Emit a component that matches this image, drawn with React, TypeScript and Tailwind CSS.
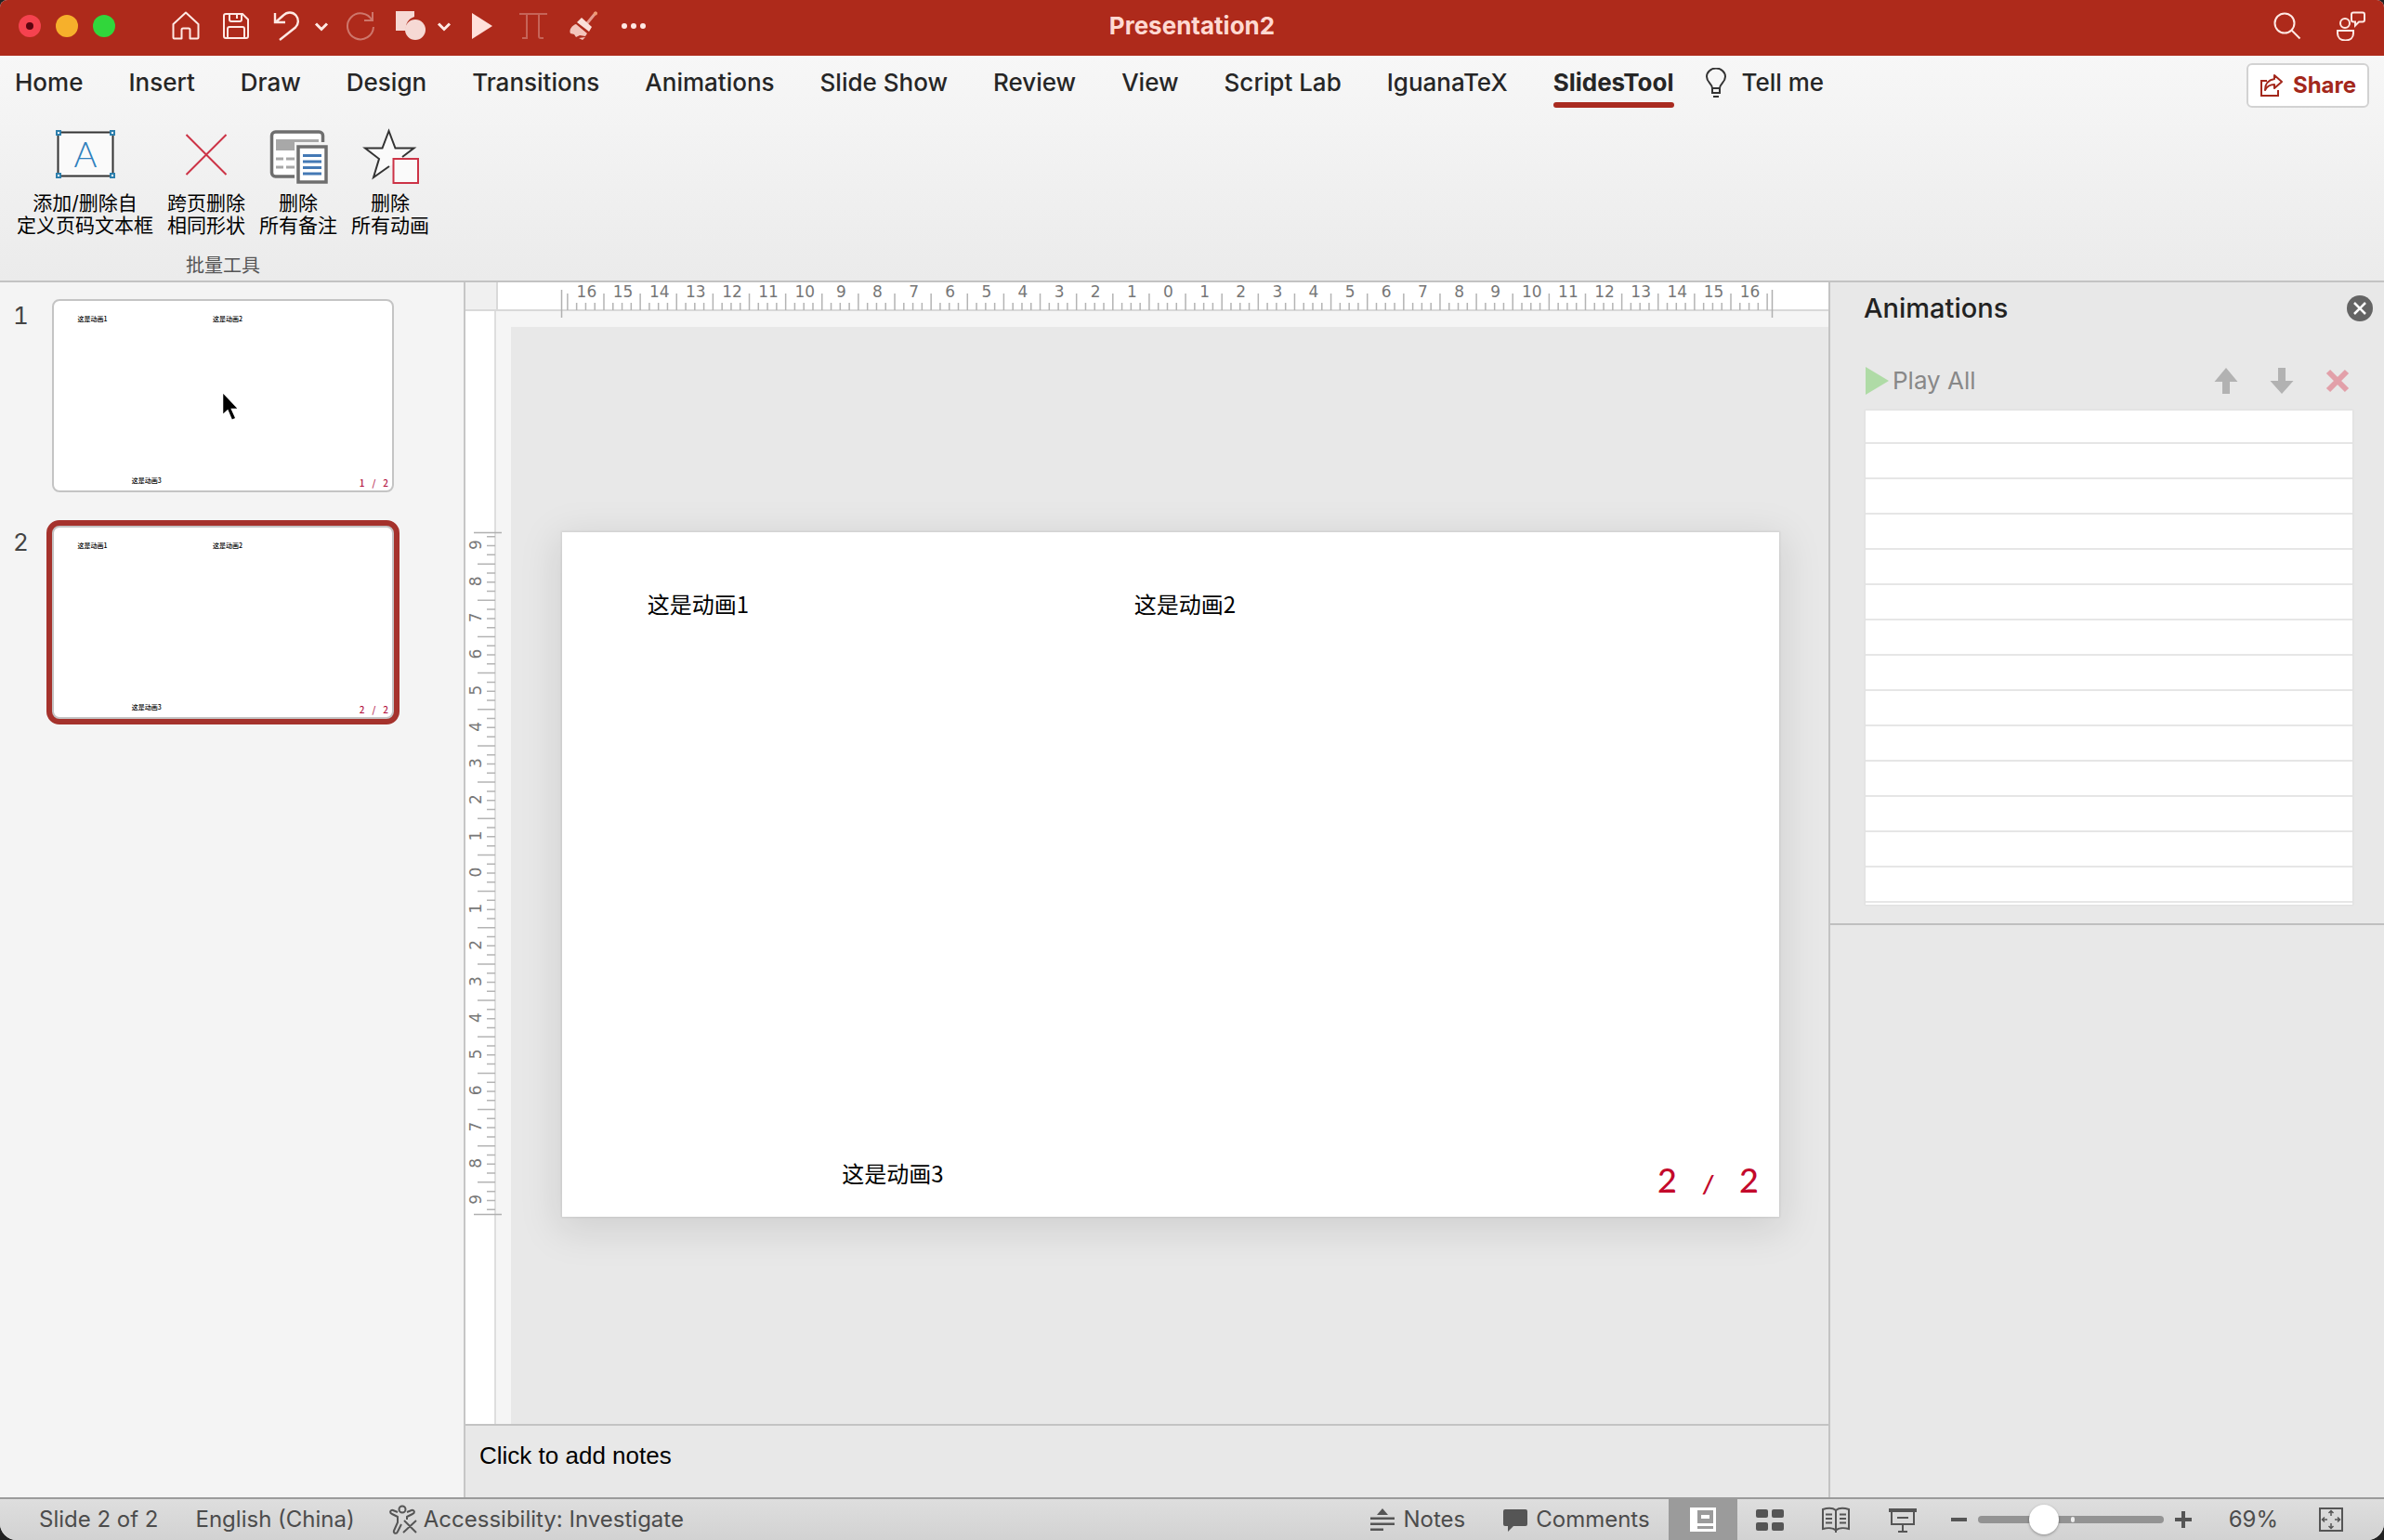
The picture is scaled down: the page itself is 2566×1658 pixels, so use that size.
import type { ReactNode } from 'react'

const tabs = [
  'Home',
  'Insert',
  'Draw',
  'Design',
  'Transitions',
  'Animations',
  'Slide Show',
  'Review',
  'View',
  'Script Lab',
  'IguanaTeX',
  'SlidesTool',
]

const activeTab = 'SlidesTool'

function IconButton({ label, className = '', children }: { label: string; className?: string; children: ReactNode }) {
  return (
    <button type="button" aria-label={label} className={`shrink-0 ${className}`}>
      {children}
    </button>
  )
}

function ToolbarIcon({ children }: { children: ReactNode }) {
  return (
    <svg width="32" height="32" viewBox="0 0 32 32" fill="none" stroke="#ffe9e4" strokeWidth="2">
      {children}
    </svg>
  )
}

function Chevron() {
  return (
    <svg width="16" height="32" viewBox="0 0 16 32" fill="none" stroke="#ffe9e4" strokeWidth="3">
      <path d="M2 13.5l6 6 6-6" />
    </svg>
  )
}

function TitleBar() {
  return (
    <header className="grid h-[60px] grid-cols-[1fr_auto_1fr] items-center bg-[#ae2a1b] pb-1">
      <div className="flex items-center">
        <div className="flex gap-4 pl-5">
          <button type="button" aria-label="Close" className="flex size-6 items-center justify-center rounded-full bg-[#f5424f]">
            <span className="size-2 rounded-full bg-[#5c0510]" />
          </button>
          <button type="button" aria-label="Minimize" className="size-6 rounded-full bg-[#f6b02b]" />
          <button type="button" aria-label="Zoom" className="size-6 rounded-full bg-[#31d63b]" />
        </div>
        <div className="ml-[60px] flex items-center gap-[22px]">
          <IconButton label="Home">
            <ToolbarIcon>
              <path d="M2.5 14L16 1.5 29.5 14v14.5a1 1 0 0 1-1 1h-8V20a1.5 1.5 0 0 0-1.5-1.5h-6a1.5 1.5 0 0 0-1.5 1.5v9.5h-8a1 1 0 0 1-1-1z" strokeLinejoin="round" />
            </ToolbarIcon>
          </IconButton>
          <IconButton label="Save">
            <ToolbarIcon>
              <path d="M5 3h18l6 6v18a2 2 0 0 1-2 2H5a2 2 0 0 1-2-2V5a2 2 0 0 1 2-2z" />
              <path d="M9 3v6a2 2 0 0 0 2 2h9a2 2 0 0 0 2-2V3M7 29V19a2 2 0 0 1 2-2h14a2 2 0 0 1 2 2v10M17 3v5" />
            </ToolbarIcon>
          </IconButton>
          <IconButton label="Undo">
            <ToolbarIcon>
              <path d="M4 2v10h11M4.5 12L13 4.5c4-4 10-4 13.500 0s3 9.500-.5 13L9 31" strokeWidth="2.4" />
            </ToolbarIcon>
          </IconButton>
          <IconButton label="Undo options" className="-mr-1 -ml-2">
            <Chevron />
          </IconButton>
          <IconButton label="Redo" className="opacity-40">
            <ToolbarIcon>
              <path d="M29 1v9H20M28.5 10A14 14 0 1 0 30 17" />
            </ToolbarIcon>
          </IconButton>
          <IconButton label="Shapes">
            <ToolbarIcon>
              <path d="M0 0h20v6c-6 2-10 7-9 15H0z" fill="#f6d9d4" stroke="none" />
              <circle cx="21" cy="20" r="11" fill="#f6d9d4" stroke="none" />
            </ToolbarIcon>
          </IconButton>
          <IconButton label="Shape options" className="-mr-1 -ml-2.5">
            <Chevron />
          </IconButton>
          <IconButton label="Play from start">
            <ToolbarIcon>
              <path d="M4 2l22 14L4 30z" fill="#ffe0da" stroke="none" />
            </ToolbarIcon>
          </IconButton>
          <IconButton label="Equation" className="opacity-30">
            <ToolbarIcon>
              <path d="M1 3h30M9 3v26H4M22 3v24a2 2 0 0 0 2 2h3" />
            </ToolbarIcon>
          </IconButton>
          <IconButton label="Format painter">
            <ToolbarIcon>
              <path d="M29 2l-9 11" stroke="#e59a8e" strokeWidth="3" strokeLinecap="round" />
              <circle cx="29" cy="2.5" r="2" fill="#ef9a72" stroke="none" />
              <path d="M14 7l11 10-3 5L9 12z" fill="#fbe0da" stroke="none" />
              <path d="M8 14l12 10-2 3-6-1-4 2-2-3-4-1c-2-4 2-9 6-10zM11 29l7-1-3 3z" fill="#f3c4bb" stroke="none" />
            </ToolbarIcon>
          </IconButton>
          <IconButton label="More">
            <ToolbarIcon>
              <g fill="#ffe9e4" stroke="none">
                <circle cx="6" cy="16" r="3" />
                <circle cx="16" cy="16" r="3" />
                <circle cx="26" cy="16" r="3" />
              </g>
            </ToolbarIcon>
          </IconButton>
        </div>
      </div>
      <h1 className="text-[26px] leading-8 font-bold text-[#ffd9d2]">Presentation2</h1>
      <div className="flex items-center justify-end gap-9 pr-5">
        <IconButton label="Search">
          <ToolbarIcon>
            <circle cx="13" cy="13" r="10.5" />
            <path d="M20.5 20.5l9 9" />
          </ToolbarIcon>
        </IconButton>
        <IconButton label="Presence">
          <ToolbarIcon>
            <circle cx="10" cy="13" r="5" />
            <path d="M2 21h17v3c0 4.5-3.5 7.5-8.5 7.5S2 28.5 2 24zM19 1.5h10a2 2 0 0 1 2 2v6a2 2 0 0 1-2 2h-4l-4 4v-4h-2a2 2 0 0 1-2-2v-6a2 2 0 0 1 2-2z" />
          </ToolbarIcon>
        </IconButton>
      </div>
    </header>
  )
}

function RibbonTabs() {
  return (
    <div className="flex h-14 items-end justify-between px-4">
      <nav className="flex gap-[49px]">
        {tabs.map((tab) => (
          <button
            key={tab}
            type="button"
            className={`flex flex-col gap-1.5 text-[26px] leading-[30px] whitespace-nowrap text-[#262626] ${
              tab === activeTab ? 'font-bold' : 'font-medium'
            }`}
          >
            {tab}
            <span className={`h-1.5 w-full rounded-full ${tab === activeTab ? 'bg-[#a92b20]' : ''}`} />
          </button>
        ))}
        <button type="button" className="-ml-4 flex h-[30px] items-center gap-4 text-[26px] leading-[30px] font-medium text-[#262626]">
          <svg width="24" height="32" viewBox="0 0 24 32" fill="none" stroke="#333" strokeWidth="2">
            <path d="M8 22c0-5-6-6-6-12.5a10 9 0 0 1 20 0C22 16 16 17 16 22zM8 22v5h8v-5M9 31h6" />
          </svg>
          Tell me
        </button>
      </nav>
      <button
        type="button"
        className="flex h-12 items-center gap-2.5 rounded-md border-2 border-[#d2d2d2] bg-white px-3 text-[24px] font-bold text-[#a3271b]"
      >
        <svg width="26" height="26" viewBox="0 0 26 26" fill="none" stroke="#a3271b" strokeWidth="2">
          <path d="M8 8H2v16h18v-6" />
          <path d="M16 2l8 7-8 7v-4c-5 0-8 2-10 6 0-7 4-11 10-12z" strokeLinejoin="round" />
        </svg>
        Share
      </button>
    </div>
  )
}

function TextBoxIcon() {
  return (
    <svg width="64" height="60" viewBox="0 0 64 60" fill="none">
      <rect x="2.5" y="4.5" width="59" height="47" fill="#fafafa" stroke="#333" strokeWidth="2" />
      <text x="32" y="42" textAnchor="middle" fontSize="38" fontWeight="300" fontFamily="Lato, sans-serif" fill="#2f80bd">
        A
      </text>
      <g fill="#fff" stroke="#2f80ad" strokeWidth="2">
        <rect x="1" y="3" width="4" height="4" />
        <rect x="59" y="3" width="4" height="4" />
        <rect x="1" y="49" width="4" height="4" />
        <rect x="59" y="49" width="4" height="4" />
      </g>
    </svg>
  )
}

function CrossIcon() {
  return (
    <svg width="64" height="60" viewBox="0 0 64 60" fill="none" stroke="#cc3346" strokeWidth="2">
      <path d="M10.5 7l43 43M53.5 7l-43 43" />
    </svg>
  )
}

function NotesIcon() {
  return (
    <svg width="64" height="60" viewBox="0 0 64 60" fill="none">
      <rect x="3.5" y="4" width="55" height="48" rx="4" fill="#fff" stroke="#6e6e6e" strokeWidth="3.5" />
      <path d="M8 12h46v12H8z" fill="#a8a8a8" />
      <path d="M8 33h8M19 33h9M8 42h8M19 42h9" stroke="#a8a8a8" strokeWidth="3" />
      <path d="M28 15h36v45H28z" fill="#f4f4f4" />
      <rect x="32" y="20" width="30" height="38" fill="#fff" stroke="#6e6e6e" strokeWidth="3.5" />
      <path d="M37 29.5h20M37 36h20M37 42.5h20M37 49h20" stroke="#4479b5" strokeWidth="3" />
    </svg>
  )
}

function StarIcon() {
  return (
    <svg width="64" height="60" viewBox="0 0 64 60" fill="none">
      <path d="M30.5 3l7 18.500h20L43 34l-12 7-17 12 6-20L5 21.500h18.500z" fill="#fafafa" />
      <path d="M45 31l12.500-9.500h-20L30.500 3l-7 18.500H5L20 33l-6 20 17-12" stroke="#333" strokeWidth="2" />
      <rect x="35.5" y="33" width="26.5" height="26" fill="#fafafa" stroke="#cc3346" strokeWidth="2" />
    </svg>
  )
}

const tools = [
  { icon: <TextBoxIcon />, lines: ['添加/删除自', '定义页码文本框'] },
  { icon: <CrossIcon />, lines: ['跨页删除', '相同形状'] },
  { icon: <NotesIcon />, lines: ['删除', '所有备注'] },
  { icon: <StarIcon />, lines: ['删除', '所有动画'] },
]

function Ribbon() {
  return (
    <div className="border-b-2 border-[#c3c3c3] bg-linear-to-b from-[#f7f7f7] to-[#ebebeb] pb-1">
      <RibbonTabs />
      <section aria-label="批量工具" className="flex w-fit flex-col items-center gap-[19px] px-[18px] pt-[22px]">
        <div className="flex gap-[15px]">
          {tools.map((tool) => (
            <button key={tool.lines[1]} type="button" className="flex flex-col items-center gap-[9px] text-[21px] leading-6 text-black">
              {tool.icon}
              <span>
                {tool.lines[0]}
                <br />
                {tool.lines[1]}
              </span>
            </button>
          ))}
        </div>
        <h2 className="text-[20px] leading-6 text-[#555]">批量工具</h2>
      </section>
    </div>
  )
}

function Thumbnail({ page, selected = false }: { page: number; selected?: boolean }) {
  return (
    <li className="flex">
      <span className="w-[50px] pt-2 pl-[14px] text-[26px] leading-8 text-[#444] tabular-nums">{page}</span>
      <button
        type="button"
        aria-label={`Slide ${page}`}
        className={`h-[220px] w-[380px] rounded-[14px] border-[6px] text-left ${selected ? 'border-[#a5322c] bg-[#a5322c]' : 'border-transparent'}`}
      >
        <div className="relative size-full rounded-lg border-2 border-[#c4c4c4] bg-white font-['Noto_Sans_CJK_SC',sans-serif] text-[7px] leading-[10px] font-medium text-black">
          <span className="absolute top-[7%] left-[7%]">这是动画1</span>
          <span className="absolute top-[7%] left-[47%]">这是动画2</span>
          <span className="absolute bottom-[3%] left-[23%]">这是动画3</span>
          <span className="absolute right-1 bottom-0.5 flex items-baseline gap-2 text-[10px] leading-3 text-[#b3123f]">
            <span>{page}</span>
            <span>/</span>
            <span>2</span>
          </span>
        </div>
      </button>
    </li>
  )
}

function SlideList() {
  return (
    <aside className="relative w-[501px] shrink-0 border-r-2 border-[#c6c6c6] bg-[#f4f4f4] pt-3">
      <ol className="flex flex-col gap-6">
        <Thumbnail page={1} />
        <Thumbnail page={2} selected />
      </ol>
      {/* Mouse pointer */}
      <svg className="absolute top-[116px] left-[237px]" width="24" height="36" viewBox="0 0 24 36">
        <path d="M2.5 2v25l5.500-5 4.500 10.500 4.500-2-4.500-10h7.500z" fill="#000" stroke="#fff" strokeWidth="1.5" />
      </svg>
    </aside>
  )
}

// Pixels per centimetre at the current zoom
const UNIT = 39.16

function ticks(halfLength: number) {
  const count = Math.floor(halfLength * 4)
  return Array.from({ length: count * 2 + 1 }, (_, i) => {
    const step = i - count
    return { offset: (step / 4) * UNIT, major: Math.abs(step) % 4 === 2 }
  })
}

function HorizontalRuler() {
  const center = 654
  const labels = Array.from({ length: 33 }, (_, i) => i - 16)
  return (
    <svg viewBox="0 0 1310 40" className="w-full overflow-visible">
      <path
        d={ticks(16.5)
          .map((t) => `M${center + t.offset} ${t.major ? 12 : 22}V30`)
          .join('')}
        stroke="#b4b4b4"
        strokeWidth="1.5"
      />
      <path d="M1.5 8v30M1305.5 8v30" stroke="#b0b0b0" strokeWidth="1.5" />
      {labels.map((n) => (
        <text key={n} x={center + n * UNIT + 1} y="16" textAnchor="middle" fontSize="17" fontFamily="DejaVu Sans" fill="#777">
          {Math.abs(n)}
        </text>
      ))}
    </svg>
  )
}

function VerticalRuler() {
  const center = 368
  const labels = Array.from({ length: 19 }, (_, i) => i - 9)
  return (
    <svg width="40" height="738" viewBox="0 0 40 738" className="shrink-0 overflow-visible">
      <path
        d={ticks(9.25)
          .map((t) => `M${t.major ? 13 : 23} ${center + t.offset}H32`)
          .join('')}
        stroke="#b4b4b4"
        strokeWidth="1.5"
      />
      <path d="M9 1.5h30M9 735.5h30" stroke="#b0b0b0" strokeWidth="1.5" />
      {labels.map((n) => (
        <text
          key={n}
          transform={`translate(17 ${center + n * UNIT - 1}) rotate(-90)`}
          textAnchor="middle"
          fontSize="17"
          fontFamily="DejaVu Sans"
          fill="#777"
        >
          {Math.abs(n)}
        </text>
      ))}
    </svg>
  )
}

function Editor() {
  return (
    <main className="flex min-w-0 flex-1 flex-col">
      <div className="grid min-h-0 flex-1 grid-cols-[33px_1fr] grid-rows-[31px_1fr] bg-[#e8e8e8]">
        <div className="border-b-2 border-[#d9d9d9] bg-[#f0f0f0]" />
        <div className="z-10 border-b-2 border-l-2 border-[#d9d9d9] bg-white pr-14 pl-[67px]">
          <HorizontalRuler />
        </div>
        <div className="z-10 flex items-center border-r-2 border-[#dedede] bg-white pt-[14px]">
          <VerticalRuler />
        </div>
        <div className="flex items-center border-t-[17px] border-l-[16px] border-[#f5f5f5] pr-[53px] pb-0.5 pl-[55px]">
          <div className="relative aspect-video w-full bg-white font-['Noto_Sans_CJK_SC',sans-serif] text-[24px] leading-8 text-black shadow-[0_10px_40px_6px_rgba(0,0,0,0.10),0_0_2px_1px_rgba(0,0,0,0.08)]">
            <p className="absolute top-[61px] left-[7%]">这是动画1</p>
            <p className="absolute top-[61px] left-[47%]">这是动画2</p>
            <p className="absolute bottom-[31px] left-[23%]">这是动画3</p>
            <p className="absolute right-[22px] bottom-4 flex items-baseline gap-7 font-[Lato] text-[36px] leading-10 font-medium text-[#c3082b]">
              <span>2</span>
              <span className="text-[26px] font-bold italic">/</span>
              <span>2</span>
            </p>
          </div>
        </div>
      </div>
      <div className="flex h-[79px] shrink-0 border-t-2 border-[#c3c3c3] bg-[#e8e8e8] pt-3 pl-[15px]">
        <textarea
          aria-label="Notes"
          rows={1}
          placeholder="Click to add notes"
          className="h-12 w-full resize-none overflow-hidden bg-transparent font-['Liberation_Sans'] text-[26px] leading-10 placeholder:text-black focus:outline-none"
        />
      </div>
    </main>
  )
}

function AnimationsPane() {
  return (
    <aside className="w-[598px] shrink-0 border-l-2 border-[#c3c3c3] bg-[#e8e8e8]">
      <div className="border-b-2 border-[#bfbfbf] pb-5">
        <div className="flex h-14 items-center justify-between pr-3 pl-9">
          <h2 className="text-[29px] leading-9 font-medium text-[#222]">Animations</h2>
          <IconButton label="Close pane">
            <svg width="28" height="28" viewBox="0 0 28 28" fill="none" stroke="#fff" strokeWidth="2.5">
              <circle cx="14" cy="14" r="14" fill="#646464" stroke="none" />
              <path d="M8 8l12 12M20 8L8 20" />
            </svg>
          </IconButton>
        </div>
        <div className="flex items-center justify-between pt-8 pr-9 pl-[38px]">
          <button type="button" disabled className="flex items-center gap-1 text-[26px] leading-9 text-[#888]">
            <svg width="25" height="30" viewBox="0 0 25 30">
              <path d="M0 0l25 15L0 30z" fill="#afdba6" />
            </svg>
            Play All
          </button>
          <div className="flex gap-8">
            <IconButton label="Move up">
              <svg width="28" height="30" viewBox="0 0 28 30">
                <path d="M14 1l12.500 15H18v13h-8V16H1.500z" fill="#b2b2b2" />
              </svg>
            </IconButton>
            <IconButton label="Move down">
              <svg width="28" height="30" viewBox="0 0 28 30">
                <path d="M14 29l12.500-14H18V1h-8v14H1.500z" fill="#b2b2b2" />
              </svg>
            </IconButton>
            <IconButton label="Delete">
              <svg width="28" height="30" viewBox="0 0 28 30" stroke="#e2a0a9" strokeWidth="6">
                <path d="M4 5l20 20M24 5L4 25" />
              </svg>
            </IconButton>
          </div>
        </div>
        <ul className="mt-3.5 mr-[34px] ml-[38px] bg-white pb-0.5 shadow-[0_0_2px_1px_rgba(0,0,0,0.04)]">
          {Array.from({ length: 14 }, (_, i) => (
            <li key={i} className="h-[38px] border-b-2 border-[#e6e6e6] first:h-9" />
          ))}
        </ul>
      </div>
    </aside>
  )
}

function StatusBar() {
  return (
    <footer className="flex h-[46px] shrink-0 items-center justify-between border-t-2 border-[#9b9b9b] bg-linear-to-b from-[#dedede] to-[#d2d2d2] text-[24px] leading-7 text-[#4c4c4c]">
      <div className="flex items-center gap-10 pl-[42px]">
        <span>Slide 2 of 2</span>
        <button type="button">English (China)</button>
        <button type="button" className="-ml-1 flex items-center gap-1.5">
          <svg width="32" height="32" viewBox="0 0 32 32" fill="none" stroke="#555" strokeWidth="2">
            <circle cx="15" cy="5" r="3.5" />
            <path d="M10 8L5 6c-3-1-4 3-1 4l6 3v6L6 28c-1 3 3 4 4 1l4-8M20 8l5-2c3-1 4 3 1 4l-6 3v3M17 17l13 13M30 17L16 30" strokeLinejoin="round" />
          </svg>
          Accessibility: Investigate
        </button>
      </div>
      <div className="flex h-full items-center">
        <button type="button" className="flex items-center gap-2">
          <svg width="28" height="28" viewBox="0 0 28 28" fill="#555">
            <path d="M14 2l6 7H8zM1 11.5h26V14H1zM1 17.5h26V20H1zM1 23.5h14V26H1z" />
          </svg>
          Notes
        </button>
        <button type="button" className="ml-10 flex items-center gap-2">
          <svg width="28" height="28" viewBox="0 0 28 28" fill="#555">
            <path d="M3 3h22a2 2 0 0 1 2 2v14a2 2 0 0 1-2 2H12l-6 6v-6H3a2 2 0 0 1-2-2V5a2 2 0 0 1 2-2z" />
          </svg>
          Comments
        </button>
        <IconButton label="Normal view" className="ml-5 flex h-full w-[74px] items-center justify-center bg-[#9b9b9b]">
          <svg width="30" height="30" viewBox="0 0 30 30">
            <path d="M1 2h28v26H1z" fill="#fff" />
            <path d="M9 5h17v14H9zM9 22h17v3H9z" fill="#9b9b9b" />
            <path d="M13 10h9v4h-9z" fill="#fff" />
          </svg>
        </IconButton>
        <IconButton label="Slide sorter" className="ml-[18px]">
          <svg width="34" height="28" viewBox="0 0 34 28" fill="#555">
            <rect x="2" y="3" width="13" height="9" rx="2" />
            <rect x="19" y="3" width="13" height="9" rx="2" />
            <rect x="2" y="17" width="13" height="9" rx="2" />
            <rect x="19" y="17" width="13" height="9" rx="2" />
          </svg>
        </IconButton>
        <IconButton label="Reading view" className="ml-[38px]">
          <svg width="32" height="30" viewBox="0 0 32 30" fill="none" stroke="#555" strokeWidth="2">
            <path d="M16 5c-3-2.5-9-2.5-14-1v21c5-1.5 11-1 14 1.500 3-2.500 9-3 14-1.500V4c-5-1.500-11-1.500-14 1zM16 5v24M5 9.500h7M5 14h7M5 18.500h7M20 9.500h7M20 14h7M20 18.500h7" />
          </svg>
        </IconButton>
        <IconButton label="Slide show" className="ml-10">
          <svg width="32" height="30" viewBox="0 0 32 30" fill="none" stroke="#555" strokeWidth="2">
            <path d="M1 5h30" strokeWidth="4" />
            <path d="M4 5v15h24V5M10 13h12M16 20v7M11 28h10" />
          </svg>
        </IconButton>
        <IconButton label="Zoom out" className="ml-9">
          <svg width="17" height="18" viewBox="0 0 17 18" stroke="#555" strokeWidth="4">
            <path d="M0 9h17" />
          </svg>
        </IconButton>
        <div className="relative ml-3 flex items-center">
          <input
            type="range"
            aria-label="Zoom"
            min={0}
            max={100}
            defaultValue={33}
            className="h-2 w-[200px] appearance-none rounded-full bg-[#939393] [&::-webkit-slider-thumb]:relative [&::-webkit-slider-thumb]:size-8 [&::-webkit-slider-thumb]:appearance-none [&::-webkit-slider-thumb]:rounded-full [&::-webkit-slider-thumb]:bg-white [&::-webkit-slider-thumb]:shadow-[0_1px_3px_rgba(0,0,0,0.35)]"
          />
          <span className="pointer-events-none absolute left-1/2 h-1.5 w-1 rounded-full bg-[#eee]" />
        </div>
        <IconButton label="Zoom in" className="ml-3">
          <svg width="18" height="18" viewBox="0 0 18 18" stroke="#555" strokeWidth="4">
            <path d="M0 9h18M9 0v18" />
          </svg>
        </IconButton>
        <button type="button" className="ml-10">
          69%
        </button>
        <IconButton label="Fit to window" className="mr-11 ml-11">
          <svg width="26" height="28" viewBox="0 0 26 28" fill="none" stroke="#555" strokeWidth="2">
            <rect x="1" y="2" width="24" height="24" />
            <path d="M13 4v6M13 24v-6M3 14h6M23 14h-6M10.5 7L13 4.5 15.5 7M10.5 21l2.500 2.500 2.500-2.500M6 11.5L3.5 14 6 16.5M20 11.5l2.500 2.500-2.500 2.500" strokeWidth="1.5" />
          </svg>
        </IconButton>
      </div>
    </footer>
  )
}

export default function App() {
  return (
    <div className="h-screen bg-[#222]">
      <div className="flex h-full flex-col overflow-hidden rounded-t-lg rounded-b-[18px] bg-[#e8e8e8] font-[Inter,'Noto_Sans_CJK_SC',sans-serif]">
        <TitleBar />
        <Ribbon />
        <div className="flex min-h-0 flex-1">
          <SlideList />
          <Editor />
          <AnimationsPane />
        </div>
        <StatusBar />
      </div>
    </div>
  )
}
